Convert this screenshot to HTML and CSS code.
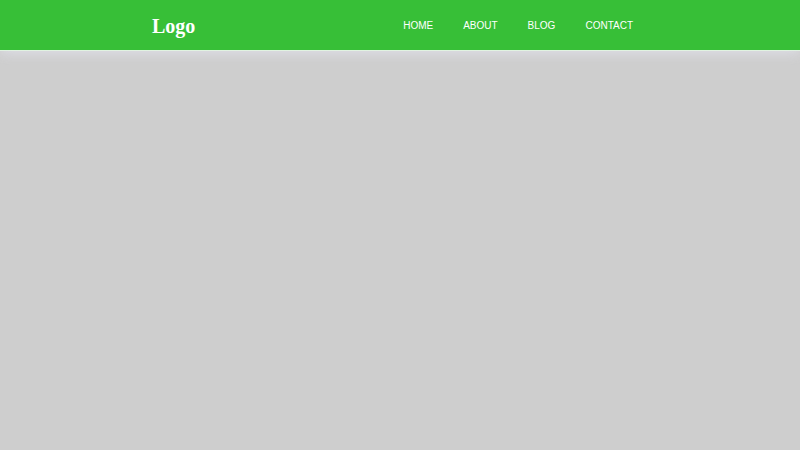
FILE: index.html
```html
<!DOCTYPE html>
<html>
<head>
<meta charset="utf-8">
<link rel="stylesheet" href="styles.css">
</head>
<body>
<header class="header">
  <div class="container">
    <div class="logo">Logo</div>
    <nav class="nav">
      <a href="#">HOME</a>
      <a href="#">ABOUT</a>
      <a href="#">BLOG</a>
      <a href="#">CONTACT</a>
    </nav>
  </div>
</header>
<main class="main"></main>
</body>
</html>
```
FILE: styles.css
```css
html, body {
  margin: 0;
  padding: 0;
  height: 100%;
}
body {
  background: #cecece;
  font-family: "Liberation Sans", Arial, sans-serif;
}
.header {
  background: #37bf37;
  height: 50px;
  box-shadow: 0 1px 0 rgba(225, 245, 225, 0.9), 0 3px 12px rgba(235, 235, 250, 0.6);
  position: relative;
}
.container {
  width: 496px;
  margin: 0 auto;
  height: 100%;
  display: flex;
  align-items: center;
  justify-content: space-between;
}
.logo {
  font-family: "Liberation Serif", "Times New Roman", serif;
  font-weight: bold;
  font-size: 20px;
  color: #ffffff;
  margin-top: 3px;
}
.nav {
  display: flex;
}
.nav a {
  color: #ffffff;
  text-decoration: none;
  font-size: 10px;
  padding: 0 15px;
  margin-top: 1px;
}
```
